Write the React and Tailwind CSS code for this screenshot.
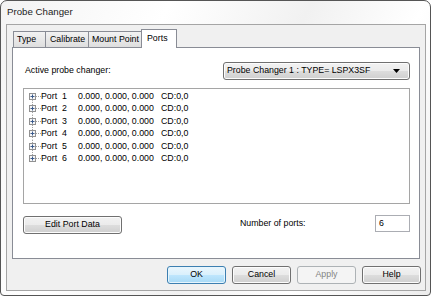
import React from "react";

const ports = [1, 2, 3, 4, 5, 6];

const btn =
  "h-[18px] rounded-[3px] border border-[#707070] bg-[linear-gradient(#f2f2f2_0%,#ebebeb_50%,#dddddd_51%,#cfcfcf_100%)] shadow-[inset_0_0_0_1px_#fcfcfc] flex items-center justify-center";

function TreeNode({ first, last }) {
  return (
    <svg width="17" height="12.4" viewBox="0 0 17 12.4" className="shrink-0">
      {/* vertical connector */}
      <line
        x1="8.5"
        x2="8.5"
        y1={first ? 6.2 : 0}
        y2={last ? 6.2 : 12.4}
        stroke="#a0a0a0"
        strokeWidth="1"
        strokeDasharray="1 1"
      />
      {/* horizontal connector */}
      <line x1="12" x2="17" y1="6.5" y2="6.5" stroke="#a0a0a0" strokeWidth="1" strokeDasharray="1 1" />
      <rect x="5.5" y="3.5" width="6" height="6" fill="#f7f7f7" stroke="#919191" strokeWidth="1" />
      <line x1="6.5" x2="10.5" y1="6.5" y2="6.5" stroke="#3a5a8c" strokeWidth="1" />
      <line x1="8.5" x2="8.5" y1="4.5" y2="8.5" stroke="#3a5a8c" strokeWidth="1" />
    </svg>
  );
}

export default function App() {
  return (
    <div className="w-[432px] h-[296px] bg-white font-['Liberation_Sans',Arial,sans-serif] text-[8.8px] text-black">
      {/* Window frame */}
      <div className="w-[431px] h-[296px] rounded-t-[7px] rounded-b-[4px] border border-[#555555] bg-[linear-gradient(115deg,#f3f3f3_0%,#ffffff_30%,#f1f1f1_55%,#ffffff_75%,#ececec_100%)] flex flex-col pl-[5px] pr-[4px] pb-[4px]">
        {/* Title */}
        <div className="h-[23px] flex items-center pl-[1px] text-[9.7px] text-[#1b1b1b]">
          Probe Changer
        </div>

        {/* Client area */}
        <div className="flex-1 border border-[#a5a5a5] bg-[#f0f0f0] flex flex-col">
          <div className="pl-[5px] pr-[5px] pt-[4px]">
            {/* Tabs */}
            <div className="flex items-end pl-[1px] h-[18px] relative z-10">
              <div className="w-[33px] h-[16px] border border-b-0 border-[#898c95] bg-[linear-gradient(#f2f2f2,#dedede)] flex items-center pl-[3px]">
                Type
              </div>
              <div className="-ml-px w-[44px] h-[16px] border border-b-0 border-[#898c95] bg-[linear-gradient(#f2f2f2,#dedede)] flex items-center pl-[4px]">
                Calibrate
              </div>
              <div className="-ml-px w-[54px] h-[16px] border border-b-0 border-[#898c95] bg-[linear-gradient(#f2f2f2,#dedede)] flex items-center pl-[3px]">
                Mount Point
              </div>
              <div className="-ml-px w-[36px] h-[19px] -mb-px border border-b-0 border-[#898c95] bg-white flex items-start pt-[2px] pl-[5px]">
                Ports
              </div>
            </div>

            {/* Tab panel */}
            <div className="h-[212px] border border-[#898c95] bg-white pl-[10px] pr-[9px] pt-[14px] flex flex-col">
              <div className="flex items-center justify-between">
                <span className="ml-[2px]">Active probe changer:</span>
                <div className={`${btn} w-[187px] h-[17px] !justify-between pl-[3px] pr-[9px]`}>
                  <span>Probe Changer 1 : TYPE= LSPX3SF</span>
                  <svg width="7" height="4" viewBox="0 0 7 4">
                    <path d="M0 0H7L3.5 4Z" fill="#000" />
                  </svg>
                </div>
              </div>

              {/* Port tree */}
              <div className="mt-[8px] h-[116px] border border-[#a5a5a5] bg-white pt-[1px]">
                {ports.map((p, i) => (
                  <div key={p} className="flex items-center h-[12.4px] leading-[12.4px] whitespace-pre">
                    <TreeNode first={i === 0} last={i === ports.length - 1} />
                    <span className="w-[37px]">{`Port  ${p}`}</span>
                    <span className="w-[83px]">0.000, 0.000, 0.000</span>
                    <span>CD:0,0</span>
                  </div>
                ))}
              </div>

              <div className="mt-[11px] flex items-start">
                <div className={`${btn} mt-[1px] w-[99px]`}>Edit Port Data</div>
                <span className="ml-[118px] h-[17px] flex items-center">Number of ports:</span>
                <div className="ml-auto w-[35px] h-[17px] border border-[#abadb3] bg-white flex items-center pl-[3px]">
                  6
                </div>
              </div>
            </div>
          </div>

          {/* Dialog buttons */}
          <div className="flex justify-end gap-[6px] pr-[4px] pt-[7px]">
            <div className="w-[59px] h-[18px] rounded-[3px] border border-[#3c7fb1] bg-[linear-gradient(#eaf6fd_0%,#d9f0fc_50%,#bee6fd_51%,#a7d9f5_100%)] shadow-[inset_0_0_0_1px_#e6f5fd] flex items-center justify-center">
              OK
            </div>
            <div className={`${btn} w-[59px]`}>Cancel</div>
            <div className="w-[59px] h-[18px] rounded-[3px] border border-[#adb2b5] bg-[#f4f4f4] text-[#838383] flex items-center justify-center">
              Apply
            </div>
            <div className={`${btn} w-[59px]`}>Help</div>
          </div>
        </div>
      </div>
    </div>
  );
}
